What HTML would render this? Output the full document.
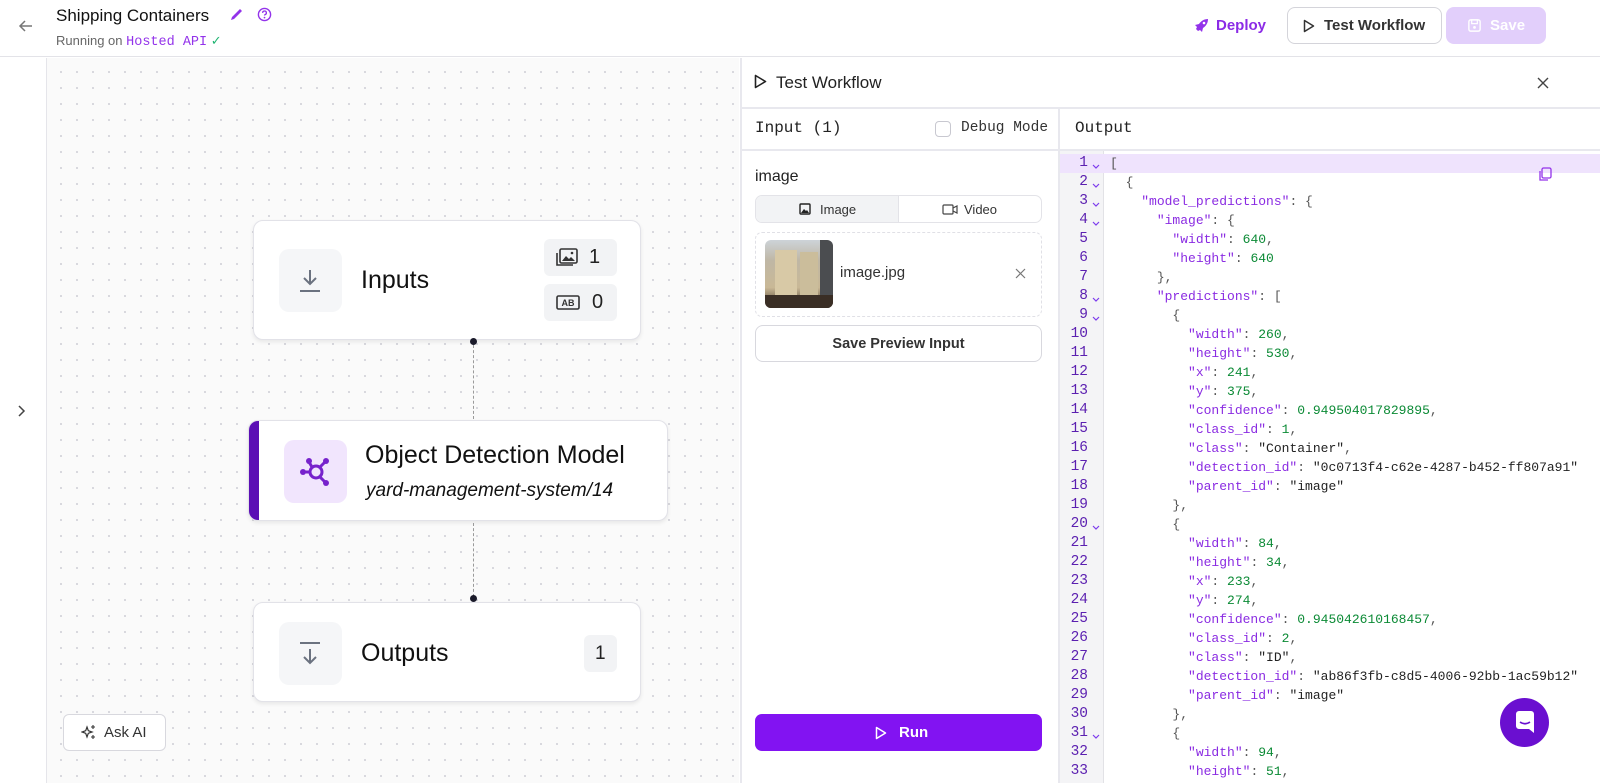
<!DOCTYPE html>
<html><head><meta charset="utf-8">
<style>
*{box-sizing:border-box;margin:0;padding:0}
body{width:1600px;height:783px;overflow:hidden;font-family:"Liberation Sans",sans-serif;background:#fff;position:relative;color:#111}
.abs{position:absolute}
.mono{font-family:"Liberation Mono",monospace}
.header{left:0;top:0;width:1600px;height:57px;border-bottom:1px solid #e3e3e8;background:#fff}
.canvas{left:47px;top:58px;width:692px;height:725px;background-color:#fafafa;background-image:radial-gradient(#d6d6dc 1px,transparent 1.2px);background-size:16px 16px;background-position:6px 6px}
.side{left:0;top:58px;width:47px;height:725px;background:#fff;border-right:1px solid #e5e5ea}
.card{background:#fff;border:1px solid #e2e2e8;border-radius:10px;box-shadow:0 2px 4px rgba(0,0,0,.08)}
.iconbox{background:#f5f6f8;border-radius:10px}
.badge{background:#f2f3f5;border-radius:6px;font-size:20px;color:#222}
.panel{left:740px;top:58px;width:860px;height:725px;background:#fff;border-left:2px solid #e8e8ee}
.code div{position:absolute;height:19px;line-height:19px;white-space:pre}
.k{color:#8a2be2}.n{color:#0b8a35}.p{color:#555}.s{color:#222}
.ln{position:absolute;width:30px;text-align:right;color:#5b1fb0;font-size:14.5px;height:19px;line-height:19px;font-family:"Liberation Mono",monospace}
</style></head><body>

<div class="abs header">
  <svg class="abs" style="left:17px;top:17px" width="18" height="18" viewBox="0 0 18 18"><path d="M15 9H3M8 4L3 9l5 5" fill="none" stroke="#777" stroke-width="1.5"/></svg>
  <div class="abs" style="left:56px;top:6px;font-size:17px;color:#111">Shipping Containers</div>
  <svg class="abs" style="left:229px;top:8px" width="14" height="14" viewBox="0 0 14 14"><path d="M2 12l1-3 6-6 2 2-6 6z M9 3l2-2 2 2-2 2" fill="#9333ea"/></svg>
  <svg class="abs" style="left:257px;top:7px" width="15" height="15" viewBox="0 0 16 16"><circle cx="8" cy="8" r="6.5" fill="none" stroke="#9333ea" stroke-width="1.5"/><path d="M6 6.3a2 2 0 1 1 2.5 1.9c-.4.2-.5.5-.5.9" fill="none" stroke="#9333ea" stroke-width="1.4"/><circle cx="8" cy="11.3" r=".9" fill="#9333ea"/></svg>
  <div class="abs" style="left:56px;top:33px;font-size:13px;color:#666">Running on <span class="mono" style="color:#9333ea;font-size:13.5px">Hosted API</span> <span style="color:#22b573">✓</span></div>
  <svg class="abs" style="left:1193px;top:18px" width="16" height="16" viewBox="0 0 16 16"><path d="M15 1c-4 0-7 2-9 5l-4 1 2 2-1 2 2 2 2-1 2 2 1-4c3-2 5-5 5-9z" fill="#9333ea"/><circle cx="11" cy="5" r="1.3" fill="#fff"/></svg>
  <div class="abs" style="left:1216px;top:17px;font-size:15px;font-weight:bold;color:#8b2be6">Deploy</div>
  <div class="abs" style="left:1287px;top:7px;width:155px;height:37px;border:1px solid #d4d4da;border-radius:8px"></div>
  <svg class="abs" style="left:1303px;top:19px" width="12" height="14" viewBox="0 0 12 14"><path d="M1.5 1.5v11l9-5.5z" fill="none" stroke="#333" stroke-width="1.5" stroke-linejoin="round"/></svg>
  <div class="abs" style="left:1324px;top:17px;font-size:15px;font-weight:bold;color:#333">Test Workflow</div>
  <div class="abs" style="left:1446px;top:7px;width:100px;height:37px;background:#e2cffb;border-radius:8px"></div>
  <svg class="abs" style="left:1467px;top:18px" width="15" height="15" viewBox="0 0 16 16"><rect x="2" y="2" width="12" height="12" rx="2" fill="none" stroke="#fff" stroke-width="1.5"/><rect x="5" y="2" width="6" height="4" fill="none" stroke="#fff" stroke-width="1.3"/><circle cx="8" cy="10" r="1.5" fill="#fff"/></svg>
  <div class="abs" style="left:1490px;top:17px;font-size:15px;font-weight:bold;color:#fff">Save</div>
</div>

<div class="abs side"></div>
<svg class="abs" style="left:16px;top:404px" width="12" height="14" viewBox="0 0 12 14"><path d="M3 2l5 5-5 5" fill="none" stroke="#444" stroke-width="1.5"/></svg>

<div class="abs canvas"></div>

<!-- Inputs card -->
<div class="abs card" style="left:253px;top:220px;width:388px;height:120px">
  <div class="abs iconbox" style="left:25px;top:28px;width:63px;height:63px"></div>
  <svg class="abs" style="left:44px;top:47px" width="24" height="26" viewBox="0 0 24 26"><path d="M12 2v14M6 10l6 6 6-6M2 23h20" fill="none" stroke="#6b7280" stroke-width="2"/></svg>
  <div class="abs" style="left:107px;top:45px;font-size:25px">Inputs</div>
  <div class="abs badge" style="left:290px;top:18px;width:73px;height:37px"><svg class="abs" style="left:12px;top:9px" width="22" height="19" viewBox="0 0 22 19"><rect x="4" y="1" width="17" height="14" rx="1.5" fill="none" stroke="#333" stroke-width="1.6"/><path d="M1 5v12h16" fill="none" stroke="#333" stroke-width="1.6"/><path d="M6 13l4-5 3 3 2-2 4 4z" fill="#333"/><circle cx="16" cy="5" r="1.3" fill="#333"/></svg><span class="abs" style="left:45px;top:7px">1</span></div>
  <div class="abs badge" style="left:290px;top:63px;width:73px;height:37px"><svg class="abs" style="left:12px;top:11px" width="24" height="15" viewBox="0 0 24 15"><rect x="1" y="1" width="22" height="13" rx="1.5" fill="none" stroke="#333" stroke-width="1.6"/><text x="12" y="11" text-anchor="middle" font-size="9" font-weight="bold" font-family="Liberation Sans" fill="#333">AB</text></svg><span class="abs" style="left:48px;top:7px">0</span></div>
</div>

<!-- Model card -->
<div class="abs card" style="left:248px;top:420px;width:420px;height:101px;overflow:hidden">
  <div class="abs" style="left:0;top:0;width:10px;height:101px;background:#5b0fb5"></div>
  <div class="abs" style="left:35px;top:19px;width:63px;height:63px;background:#f1e5fd;border-radius:10px"></div>
  <svg class="abs" style="left:50px;top:34px" width="34" height="34" viewBox="0 0 34 34"><circle cx="17" cy="17" r="6" fill="none" stroke="#7722cc" stroke-width="3"/><path d="M11 17H4M21 12l5-5M21 22l5 5M13 12l-3-5" stroke="#7722cc" stroke-width="3"/><circle cx="4" cy="17" r="3" fill="#7722cc"/><circle cx="27" cy="6" r="3" fill="#7722cc"/><circle cx="27" cy="28" r="3" fill="#7722cc"/><circle cx="10" cy="6" r="3" fill="#7722cc"/></svg>
  <div class="abs" style="left:116px;top:20px;font-size:25px;white-space:nowrap">Object Detection Model</div>
  <div class="abs" style="left:117px;top:59px;font-size:19px;font-style:italic;white-space:nowrap">yard-management-system/14</div>
</div>

<!-- Outputs card -->
<div class="abs card" style="left:253px;top:602px;width:388px;height:100px">
  <div class="abs iconbox" style="left:25px;top:19px;width:63px;height:63px"></div>
  <svg class="abs" style="left:44px;top:37px" width="24" height="28" viewBox="0 0 24 28"><path d="M2 3h20M12 9v14M6 17l6 6 6-6" fill="none" stroke="#6b7280" stroke-width="2"/></svg>
  <div class="abs" style="left:107px;top:36px;font-size:25px">Outputs</div>
  <div class="abs badge" style="left:330px;top:32px;width:33px;height:37px"><span class="abs" style="left:11px;top:8px;font-size:19px">1</span></div>
</div>

<!-- connectors (on top) -->
<div class="abs" style="left:473px;top:345px;width:0;height:74px;border-left:1.5px dashed #9a9a9a"></div>
<div class="abs" style="left:473px;top:523px;width:0;height:74px;border-left:1.5px dashed #9a9a9a"></div>
<div class="abs" style="left:470px;top:338px;width:7px;height:7px;border-radius:50%;background:#1a1a2a"></div>
<div class="abs" style="left:470px;top:595px;width:7px;height:7px;border-radius:50%;background:#1a1a2a"></div>

<!-- Ask AI -->
<div class="abs" style="left:63px;top:714px;width:103px;height:37px;background:#fff;border:1px solid #d8d8de;border-radius:6px"></div>
<svg class="abs" style="left:81px;top:724px" width="16" height="16" viewBox="0 0 16 16"><path d="M6 3l1.3 3.7L11 8l-3.7 1.3L6 13l-1.3-3.7L1 8l3.7-1.3z" fill="none" stroke="#333" stroke-width="1.2"/><path d="M12 1v4M10 3h4M12 11v4M10 13h4" stroke="#333" stroke-width="1.1"/></svg>
<div class="abs" style="left:104px;top:724px;font-size:15px;color:#333">Ask AI</div>

<!-- Panel -->
<div class="abs panel">
  <svg class="abs" style="left:12px;top:16px" width="13" height="15" viewBox="0 0 13 15"><path d="M1.5 1.5v12l10-6z" fill="none" stroke="#222" stroke-width="1.6" stroke-linejoin="round"/></svg>
  <div class="abs" style="left:34px;top:15px;font-size:17px;color:#222">Test Workflow</div>
  <svg class="abs" style="left:795px;top:19px" width="12" height="12" viewBox="0 0 12 12"><path d="M1 1l10 10M11 1L1 11" stroke="#444" stroke-width="1.4"/></svg>
  <div class="abs" style="left:0;top:49px;width:860px;height:2px;background:#e8e8ee"></div>
  <div class="abs" style="left:0;top:91px;width:860px;height:2px;background:#e8e8ee"></div>
  <div class="abs" style="left:316px;top:50px;width:2px;height:675px;background:#e8e8ee"></div>
  <div class="abs mono" style="left:13px;top:61px;font-size:16px;color:#222">Input (1)</div>
  <div class="abs" style="left:193px;top:63px;width:16px;height:16px;border:1.5px solid #c8c8d0;border-radius:4px"></div>
  <div class="abs mono" style="left:219px;top:62px;font-size:14.5px;color:#333">Debug Mode</div>
  <div class="abs mono" style="left:333px;top:61px;font-size:16px;color:#222">Output</div>

  <div class="abs" style="left:13px;top:110px;font-size:16px;color:#222">image</div>
  <div class="abs" style="left:13px;top:137px;width:287px;height:28px;border:1px solid #e3e3e8;border-radius:7px;overflow:hidden">
    <div class="abs" style="left:0;top:0;width:143px;height:28px;background:#f2f3f5;border-right:1px solid #e3e3e8"></div>
  </div>
  <svg class="abs" style="left:57px;top:145px" width="12" height="12" viewBox="0 0 12 12"><rect x="1" y="1" width="10" height="10" rx="1" fill="none" stroke="#222" stroke-width="1.4"/><path d="M2 10l3-4 2 2 1-1 2 3z" fill="#222"/></svg>
  <div class="abs" style="left:78px;top:144px;font-size:13px;color:#333">Image</div>
  <svg class="abs" style="left:200px;top:146px" width="16" height="11" viewBox="0 0 16 11"><rect x="1" y="1" width="10" height="9" rx="1" fill="none" stroke="#444" stroke-width="1.2"/><path d="M11 4l4-2v7l-4-2" fill="none" stroke="#444" stroke-width="1.2"/></svg>
  <div class="abs" style="left:222px;top:144px;font-size:13px;color:#333">Video</div>

  <div class="abs" style="left:13px;top:174px;width:287px;height:85px;border:1.5px dashed #e0e0e6;border-radius:7px"></div>
  <div class="abs" style="left:23px;top:182px;width:68px;height:68px;border-radius:6px;overflow:hidden;background:linear-gradient(180deg,#cdd3d8 0%,#bfb7a5 30%,#c9b896 70%,#4a3a2a 100%)">
    <div class="abs" style="left:10px;top:10px;width:22px;height:50px;background:#d8c9a6"></div>
    <div class="abs" style="left:35px;top:12px;width:18px;height:48px;background:#cbbd9b"></div>
    <div class="abs" style="left:55px;top:0;width:13px;height:68px;background:#4b4d50"></div>
    <div class="abs" style="left:0;top:55px;width:68px;height:13px;background:#3a2e25"></div>
  </div>
  <div class="abs" style="left:98px;top:206px;font-size:15px;color:#333">image.jpg</div>
  <svg class="abs" style="left:273px;top:210px" width="11" height="11" viewBox="0 0 11 11"><path d="M1 1l9 9M10 1L1 10" stroke="#777" stroke-width="1.2"/></svg>

  <div class="abs" style="left:13px;top:267px;width:287px;height:37px;border:1px solid #d8d8de;border-radius:8px;text-align:center;line-height:36px;font-size:14.5px;font-weight:bold;color:#333">Save Preview Input</div>

  <div class="abs" style="left:13px;top:656px;width:287px;height:37px;background:#8213f2;border-radius:7px"></div>
  <svg class="abs" style="left:133px;top:668px" width="12" height="14" viewBox="0 0 12 14"><path d="M1.5 1.5v11l9-5.5z" fill="none" stroke="#fff" stroke-width="1.5" stroke-linejoin="round"/></svg>
  <div class="abs" style="left:157px;top:666px;font-size:15px;font-weight:bold;color:#fff">Run</div>

  <div class="abs" style="left:318px;top:93px;width:44px;height:632px;background:#f4f4f6;border-right:1px solid #e2e2e6"></div>
  <div class="abs" style="left:318px;top:96px;width:542px;height:19px;background:#efe3fd"></div>
  <svg class="abs" style="left:796px;top:109px" width="14" height="15" viewBox="0 0 14 15"><rect x="4" y="1" width="9" height="10" rx="1.5" fill="none" stroke="#9333ea" stroke-width="1.3"/><path d="M2 4v9h8" fill="none" stroke="#9333ea" stroke-width="1.3"/></svg>
</div>

<div class="abs code" style="left:0;top:0;width:1600px;height:783px;overflow:hidden">
<div id="lines"></div>
</div>

<div class="abs" style="left:1500px;top:698px;width:49px;height:49px;border-radius:50%;background:#6a0fd0"></div>
<svg class="abs" style="left:1513px;top:710px" width="24" height="25" viewBox="0 0 24 25"><path d="M3 4a3 3 0 0 1 3-3h12a3 3 0 0 1 3 3v19l-5-4H6a3 3 0 0 1-3-3z" fill="#fff"/><path d="M7 12q5 3.5 10 0" fill="none" stroke="#6a0fd0" stroke-width="1.6"/></svg>

<script>
var L=[
['[',1],['  {',1],['    <k>"model_predictions"</k><p>: {</p>',1],['      <k>"image"</k><p>: {</p>',1],
['        <k>"width"</k><p>: </p><n>640</n><p>,</p>'],['        <k>"height"</k><p>: </p><n>640</n>'],['      <p>},</p>'],
['      <k>"predictions"</k><p>: [</p>',1],['        <p>{</p>',1],
['          <k>"width"</k><p>: </p><n>260</n><p>,</p>'],['          <k>"height"</k><p>: </p><n>530</n><p>,</p>'],
['          <k>"x"</k><p>: </p><n>241</n><p>,</p>'],['          <k>"y"</k><p>: </p><n>375</n><p>,</p>'],
['          <k>"confidence"</k><p>: </p><n>0.949504017829895</n><p>,</p>'],['          <k>"class_id"</k><p>: </p><n>1</n><p>,</p>'],
['          <k>"class"</k><p>: </p><s>"Container"</s><p>,</p>'],['          <k>"detection_id"</k><p>: </p><s>"0c0713f4-c62e-4287-b452-ff807a91"</s>'],
['          <k>"parent_id"</k><p>: </p><s>"image"</s>'],['        <p>},</p>'],['        <p>{</p>',1],
['          <k>"width"</k><p>: </p><n>84</n><p>,</p>'],['          <k>"height"</k><p>: </p><n>34</n><p>,</p>'],
['          <k>"x"</k><p>: </p><n>233</n><p>,</p>'],['          <k>"y"</k><p>: </p><n>274</n><p>,</p>'],
['          <k>"confidence"</k><p>: </p><n>0.945042610168457</n><p>,</p>'],['          <k>"class_id"</k><p>: </p><n>2</n><p>,</p>'],
['          <k>"class"</k><p>: </p><s>"ID"</s><p>,</p>'],['          <k>"detection_id"</k><p>: </p><s>"ab86f3fb-c8d5-4006-92bb-1ac59b12"</s>'],
['          <k>"parent_id"</k><p>: </p><s>"image"</s>'],['        <p>},</p>'],['        <p>{</p>',1],
['          <k>"width"</k><p>: </p><n>94</n><p>,</p>'],['          <k>"height"</k><p>: </p><n>51</n><p>,</p>']];
var h='';
for(var i=0;i<L.length;i++){var t=154+i*19;
var c=L[i][0].replace(/<k>/g,'<span class="k">').replace(/<\/k>/g,'</span>').replace(/<n>/g,'<span class="n">').replace(/<\/n>/g,'</span>').replace(/<p>/g,'<span class="p">').replace(/<\/p>/g,'</span>').replace(/<s>/g,'<span class="s">').replace(/<\/s>/g,'</span>');
h+='<span class="ln" style="left:1058px;top:'+t+'px">'+(i+1)+'</span>';
if(L[i][1])h+='<svg style="position:absolute;left:1092px;top:'+(t+10)+'px" width="8" height="5" viewBox="0 0 8 5"><path d="M1 1l3 3 3-3" fill="none" stroke="#7c3aed" stroke-width="1.2"/></svg>';
h+='<div class="mono p" style="left:1110px;top:'+t+'px;width:490px;overflow:hidden;font-family:Liberation Mono,monospace;font-size:13px">'+c+'</div>';}
document.getElementById('lines').innerHTML=h;
</script>
</body></html>
